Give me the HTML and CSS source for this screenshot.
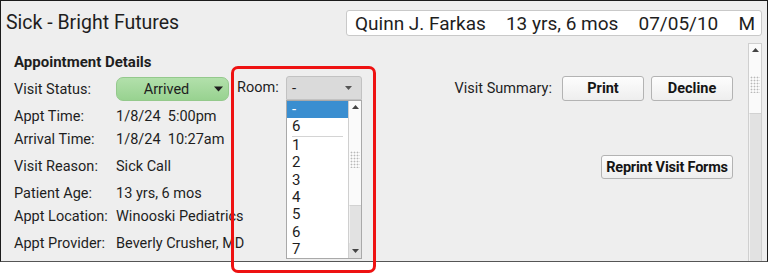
FILE: index.html
```html
<!DOCTYPE html>
<html>
    <head>
        <title>Sick - Bright Futures</title>
        <link rel="stylesheet" href="styles.css">
    </head>
    <body>
        <div id="frame">
            <div class="header">
                <div class="title">Sick - Bright Futures</div>
                <div class="patient">
                    <span>Quinn J. Farkas</span>
                    <span>13 yrs, 6 mos</span>
                    <span>07/05/10</span>
                    <span>M</span>
                </div>
            </div>

            <div class="main">
                <div class="content">
                    <div class="section">Appointment Details</div>

                    <div class="columns">
                        <div class="details">
                            <div class="row first">
                                <span class="label">Visit Status:</span>
                                <div class="status">
                                    <span>Arrived</span>
                                    <svg class="caret" width="9" height="6" viewBox="0 0 9 6"><path d="M0 0.5h9L4.5 5.5z" fill="#1e1e1e"/></svg>
                                </div>
                            </div>
                            <div class="row sep"><span class="label">Appt Time:</span><span class="value">1/8/24  5:00pm</span></div>
                            <div class="row"><span class="label">Arrival Time:</span><span class="value">1/8/24  10:27am</span></div>
                            <div class="row sep"><span class="label">Visit Reason:</span><span class="value">Sick Call</span></div>
                            <div class="row sep"><span class="label">Patient Age:</span><span class="value">13 yrs, 6 mos</span></div>
                            <div class="row"><span class="label">Appt Location:</span><span class="value">Winooski Pediatrics</span></div>
                            <div class="row sep"><span class="label">Appt Provider:</span><span class="value">Beverly Crusher, MD</span></div>
                        </div>

                        <div class="room">
                            <span class="room-label">Room:</span>
                            <div class="picker">
                                <div class="select">
                                    <span>-</span>
                                    <svg width="7" height="4" viewBox="0 0 7 4"><path d="M0 0h7L3.5 4z" fill="#555"/></svg>
                                </div>
                                <div class="listbox">
                                    <ul class="options">
                                        <li class="active">-</li>
                                        <li class="recent">6</li>
                                        <li>1</li>
                                        <li>2</li>
                                        <li>3</li>
                                        <li>4</li>
                                        <li>5</li>
                                        <li>6</li>
                                        <li>7</li>
                                    </ul>
                                    <div class="scroll small">
                                        <div class="arrow up"><svg width="7" height="4" viewBox="0 0 7 4"><path d="M0 4h7L3.5 0z" fill="#444"/></svg></div>
                                        <div class="thumb"><div class="grip"></div></div>
                                        <div class="track"></div>
                                        <div class="arrow down"><svg width="7" height="4" viewBox="0 0 7 4"><path d="M0 0h7L3.5 4z" fill="#444"/></svg></div>
                                    </div>
                                </div>
                            </div>
                        </div>

                        <div class="actions">
                            <div class="action-row">
                                <span class="action-label">Visit Summary:</span>
                                <button class="btn print">Print</button>
                                <button class="btn decline">Decline</button>
                            </div>
                            <button class="btn reprint">Reprint Visit Forms</button>
                        </div>
                    </div>
                </div>

                <div class="scroll big">
                    <div class="arrow up"><svg width="7" height="4" viewBox="0 0 7 4"><path d="M0 4h7L3.5 0z" fill="#444"/></svg></div>
                    <div class="thumb"><div class="grip"></div></div>
                    <div class="track"></div>
                </div>
            </div>
        </div>

        <div class="callout"></div>
    </body>
</html>
```

FILE: styles.css
```css
html, body{
    height: 100%;
}

body{
    margin: 0;
    min-height: 275px;
    background-color: #fff;
    font-family: Roboto, "Liberation Sans", sans-serif;
    color: #1e1e1e;
    position: relative;
}

#frame{
    width: 768px;
    height: 262px;
    box-sizing: border-box;
    border: 1px solid #1b1b1b;
    border-bottom-color: #555;
    background-color: #eeeeee;
    display: flex;
    flex-direction: column;
}

.header{
    height: 40px;
    display: flex;
    align-items: flex-start;
    padding: 9px 5px 0 5px;
    box-sizing: border-box;
}

.title{
    flex: 1;
    font-size: 19.5px;
    line-height: 26px;
}

.patient{
    width: 416px;
    height: 26px;
    box-sizing: border-box;
    background-color: #fff;
    border: 1px solid #c9c9c9;
    border-radius: 3px;
    display: flex;
    justify-content: space-between;
    align-items: center;
    padding: 0 6px 0 8px;
    font-size: 19px;
}

.main{
    flex: 1;
    display: flex;
}

.content{
    flex: 1;
    padding-left: 13px;
}

.section{
    margin-top: 12px;
    font-size: 15px;
    font-weight: bold;
    line-height: 18px;
}

.columns{
    display: flex;
    margin-top: 5px;
}

/* left column */
.details{
    width: 217px;
}

.row{
    height: 23px;
    display: flex;
    align-items: center;
    font-size: 14.5px;
}

.row.first{
    height: 24px;
    margin-top: 1px;
}

.row.sep{
    margin-top: 4px;
}

.label{
    width: 102px;
    flex-shrink: 0;
}

.value{
    white-space: pre;
}

.status{
    width: 113px;
    height: 24px;
    box-sizing: border-box;
    border: 1px solid #94c98c;
    border-radius: 7px;
    background: linear-gradient(#b2e0ab, #98d290);
    display: flex;
    align-items: center;
    position: relative;
}

.status span{
    flex: 1;
    text-align: center;
    padding-right: 12px;
}

.status .caret{
    position: absolute;
    right: 5px;
    top: 8px;
}

/* room picker */
.room{
    margin-left: 6px;
    display: flex;
    align-items: flex-start;
}

.room-label{
    width: 49px;
    height: 24px;
    line-height: 24px;
    font-size: 14.5px;
}

.picker{
    width: 76px;
}

.select{
    height: 24px;
    box-sizing: border-box;
    background-color: #dadada;
    border: 1px solid #c2c2c2;
    border-radius: 3px 3px 0 0;
    display: flex;
    align-items: center;
    justify-content: space-between;
    padding: 0 9px 0 5px;
    font-size: 15px;
}

.listbox{
    height: 159px;
    box-sizing: border-box;
    border: 1px solid #a9a9a9;
    background-color: #fff;
    display: flex;
    overflow: hidden;
}

.options{
    list-style: none;
    margin: 0;
    padding: 0;
    flex: 1;
}

.options li{
    height: 17.4px;
    line-height: 17.4px;
    padding-left: 5px;
    font-size: 15px;
}

.options li.active{
    background-color: #3a8ed0;
    color: #fff;
}

.options li.recent{
    position: relative;
}

.options li.recent::after{
    content: "";
    position: absolute;
    left: 5px;
    right: 5px;
    bottom: -1px;
    border-bottom: 1px solid #d4d4d4;
}

.options li.recent + li{
    margin-top: 1px;
}

/* scrollbars */
.scroll{
    display: flex;
    flex-direction: column;
    box-sizing: border-box;
    border-left: 1px solid #cfcfcf;
    background-color: #fafafa;
}

.scroll .arrow{
    height: 12px;
    display: flex;
    align-items: center;
    justify-content: center;
    flex-shrink: 0;
}

.scroll .thumb{
    display: flex;
    align-items: center;
    justify-content: center;
    flex-shrink: 0;
}

.scroll .grip{
    width: 10px;
    height: 17px;
    background-image: radial-gradient(circle, #b8b8b8 0.8px, transparent 1.1px);
    background-size: 3px 3px;
}

.scroll .track{
    flex: 1;
    background-color: #e2e2e2;
    border-left: 1px solid #f2f2f2;
    border-top: 1px solid #d2d2d2;
}

.scroll.small{
    width: 13px;
}

.scroll.small .thumb{
    height: 92px;
}

.scroll.small .arrow.down{
    height: 15px;
    background-color: #e2e2e2;
}

.scroll.big{
    width: 14px;
    margin: 2px 5px 0 0;
    border: 1px solid #cfcfcf;
    border-bottom: 0;
}

.scroll.big .thumb{
    height: 57px;
}

/* right column */
.actions{
    flex: 1;
    display: flex;
    flex-direction: column;
    align-items: flex-end;
    padding-right: 15px;
}

.action-row{
    height: 25px;
    display: flex;
    align-items: center;
}

.action-label{
    font-size: 14.5px;
    margin-right: 10px;
}

.btn{
    height: 25px;
    box-sizing: border-box;
    border: 1px solid #b3b3b3;
    border-radius: 3px;
    background: linear-gradient(#fdfdfd, #eeeeee);
    font-family: Roboto, "Liberation Sans", sans-serif;
    font-size: 14.5px;
    font-weight: bold;
    color: #151515;
    padding: 0;
}

.btn.print{
    width: 82px;
}

.btn.decline{
    width: 82px;
    margin-left: 7px;
}

.btn.reprint{
    width: 132px;
    height: 24px;
    margin-top: 54px;
    letter-spacing: -0.2px;
}

/* red annotation drawn over the page */
.callout{
    position: absolute;
    left: 231px;
    top: 66px;
    width: 145px;
    height: 207px;
    box-sizing: border-box;
    border: 3px solid #ee1111;
    border-radius: 7px;
}
```
